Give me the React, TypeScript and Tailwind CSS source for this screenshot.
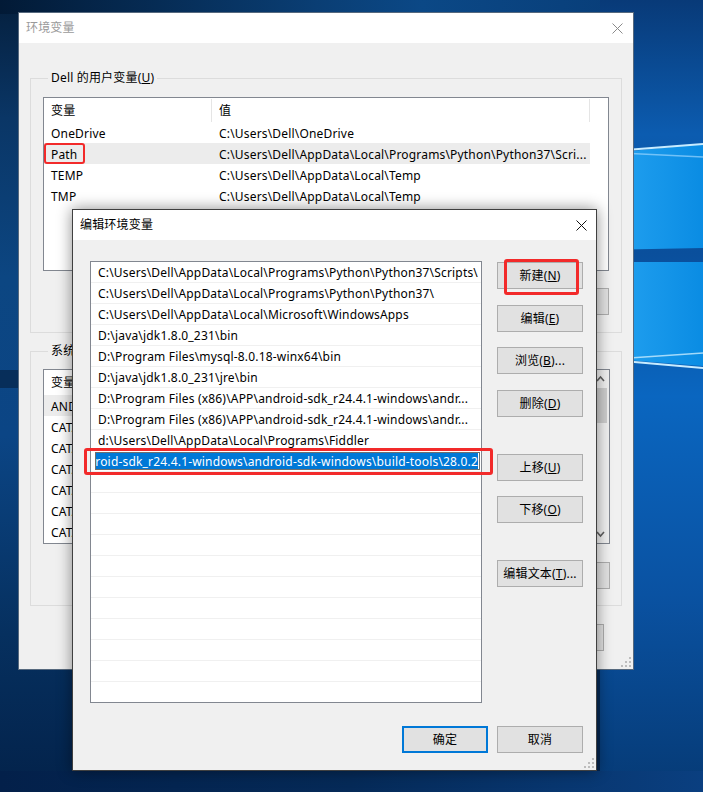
import React from "react";

function Wallpaper() {
  return (
    <svg className="absolute inset-0" width="703" height="792" viewBox="0 0 703 792">
      <defs>
        <linearGradient id="wpBase" x1="0" y1="0" x2="0" y2="1">
          <stop offset="0" stopColor="#05203e" />
          <stop offset="0.15" stopColor="#0a3666" />
          <stop offset="0.35" stopColor="#0c4682" />
          <stop offset="0.55" stopColor="#0b4585" />
          <stop offset="0.8" stopColor="#06305f" />
          <stop offset="1" stopColor="#03224a" />
        </linearGradient>
        <linearGradient id="wpTop" x1="0" y1="0" x2="1" y2="0">
          <stop offset="0" stopColor="#021a36" />
          <stop offset="0.45" stopColor="#0a3e74" />
          <stop offset="0.6" stopColor="#0b4886" />
          <stop offset="1" stopColor="#073a74" />
        </linearGradient>
        <linearGradient id="wpRight" x1="0" y1="0" x2="0" y2="1">
          <stop offset="0" stopColor="#083a78" />
          <stop offset="0.17" stopColor="#0c5cb0" />
          <stop offset="0.32" stopColor="#0a4f9c" />
          <stop offset="0.5" stopColor="#0a66c0" />
          <stop offset="0.75" stopColor="#0a52a2" />
          <stop offset="1" stopColor="#063a75" />
        </linearGradient>
        <linearGradient id="wpPane" x1="0" y1="0" x2="1" y2="0">
          <stop offset="0" stopColor="#26a4f2" />
          <stop offset="1" stopColor="#0a8ce3" />
        </linearGradient>
        <linearGradient id="wpBottom" x1="0" y1="0" x2="1" y2="0">
          <stop offset="0" stopColor="#03204a" />
          <stop offset="0.5" stopColor="#052a58" />
          <stop offset="1" stopColor="#0a3f80" />
        </linearGradient>
      </defs>
      <rect width="703" height="792" fill="url(#wpBase)" />
      <rect width="703" height="14" fill="url(#wpTop)" />
      <rect x="0" y="370" width="72" height="18" fill="#072a52" opacity="0.85" />
      <rect x="600" width="103" height="792" fill="url(#wpRight)" />
      <polygon points="600,154 703,144 703,248 600,250" fill="url(#wpPane)" />
      <polygon points="600,262 703,262 703,366 600,358" fill="url(#wpPane)" />
      <line x1="600" y1="152" x2="703" y2="144" stroke="#c8ecff" strokeWidth="2" />
      <line x1="600" y1="152" x2="703" y2="157" stroke="#9ad6ff" strokeWidth="1.5" opacity="0.7" />
      <line x1="600" y1="360" x2="703" y2="353" stroke="#c8ecff" strokeWidth="1.5" opacity="0.8" />
      <line x1="600" y1="359" x2="703" y2="368" stroke="#c8ecff" strokeWidth="2" />
      <rect y="771" width="703" height="21" fill="url(#wpBottom)" />
    </svg>
  );
}

function CloseX({ color }: { color: string }) {
  return (
    <svg width="11" height="11" viewBox="0 0 11 11">
      <path d="M0.5 0.5 L10.5 10.5 M10.5 0.5 L0.5 10.5" stroke={color} strokeWidth="1" />
    </svg>
  );
}

function Grip() {
  return (
    <svg width="10" height="10" viewBox="0 0 10 10">
      <g fill="#bdbdbd">
        <rect x="8" y="0" width="2" height="2" />
        <rect x="4" y="4" width="2" height="2" />
        <rect x="8" y="4" width="2" height="2" />
        <rect x="0" y="8" width="2" height="2" />
        <rect x="4" y="8" width="2" height="2" />
        <rect x="8" y="8" width="2" height="2" />
      </g>
    </svg>
  );
}

function Btn({
  children,
  primary,
  className,
}: {
  children: React.ReactNode;
  primary?: boolean;
  className?: string;
}) {
  return (
    <div
      className={
        (primary
          ? "border-2 border-[#0078d7] "
          : "border border-[#adadad] ") +
        "w-[86px] h-[27px] shrink-0 bg-[#e1e1e1] flex items-center justify-center whitespace-nowrap pt-[1px] " +
        (className ?? "")
      }
    >
      <span>{children}</span>
    </div>
  );
}

const userVars = [
  { name: "OneDrive", value: "C:\\Users\\Dell\\OneDrive" },
  { name: "Path", value: "C:\\Users\\Dell\\AppData\\Local\\Programs\\Python\\Python37\\Scri...", selected: true },
  { name: "TEMP", value: "C:\\Users\\Dell\\AppData\\Local\\Temp" },
  { name: "TMP", value: "C:\\Users\\Dell\\AppData\\Local\\Temp" },
];

const systemVars = [
  { name: "ANDROID_HOME", selected: true },
  { name: "CATALINA_BASE" },
  { name: "CATALINA_HOME" },
  { name: "CATALINA_TMPDIR" },
  { name: "CATALINA2_BASE" },
  { name: "CATALINA2_HOME" },
  { name: "CATALINA2_TMPDIR" },
];

const pathEntries = [
  "C:\\Users\\Dell\\AppData\\Local\\Programs\\Python\\Python37\\Scripts\\",
  "C:\\Users\\Dell\\AppData\\Local\\Programs\\Python\\Python37\\",
  "C:\\Users\\Dell\\AppData\\Local\\Microsoft\\WindowsApps",
  "D:\\java\\jdk1.8.0_231\\bin",
  "D:\\Program Files\\mysql-8.0.18-winx64\\bin",
  "D:\\java\\jdk1.8.0_231\\jre\\bin",
  "D:\\Program Files (x86)\\APP\\android-sdk_r24.4.1-windows\\andr...",
  "D:\\Program Files (x86)\\APP\\android-sdk_r24.4.1-windows\\andr...",
  "d:\\Users\\Dell\\AppData\\Local\\Programs\\Fiddler",
];

const editingValue =
  "D:\\Program Files (x86)\\APP\\android-sdk_r24.4.1-windows\\android-sdk-windows\\build-tools\\28.0.2";

function EnvironmentWindow() {
  return (
    <div className="absolute left-[18px] top-[12px] w-[616px] h-[658px] border border-[#56697e] bg-[#f0f0f0] flex flex-col">
      <div className="h-[30px] shrink-0 bg-white flex items-center justify-between pl-[7px] pr-[10px]">
        <span className="text-[#9a9a9a]">环境变量</span>
        <CloseX color="#8a8a8a" />
      </div>
      <div className="flex-1 flex flex-col px-[11px] relative">
        <fieldset className="mt-[27px] border border-[#dcdcdc] px-[12px] pb-[17px]">
          <legend className="ml-[5px] px-[3px] leading-[16px]">
            Dell 的用户变量(<u>U</u>)
          </legend>
          <div className="mt-[11px] h-[174px] border border-[#828790] bg-white overflow-hidden">
            <div className="flex h-[24px] pt-[1px]">
              <div className="w-[168px] pl-[7px] flex items-center border-r border-[#e5e5e5]">变量</div>
              <div className="w-[378px] pl-[7px] flex items-center border-r border-[#e5e5e5]">值</div>
            </div>
            {userVars.map((v) => (
              <div
                key={v.name}
                className={"flex h-[21px] w-[546px] items-center pt-[2px] " + (v.selected ? "bg-[#ececec]" : "")}
              >
                <div className="w-[168px] pl-[7px] whitespace-nowrap">{v.name}</div>
                <div className="w-[378px] pl-[7px] whitespace-nowrap overflow-hidden">{v.value}</div>
              </div>
            ))}
          </div>
          <div className="mt-[17px] flex justify-end gap-[10px]">
            <Btn>新建(<u>W</u>)...</Btn>
            <Btn>编辑(<u>I</u>)...</Btn>
            <Btn>删除(<u>D</u>)</Btn>
          </div>
        </fieldset>

        <fieldset className="mt-[10px] border border-[#dcdcdc] pl-[12px] pr-[11px] pb-[16px]">
          <legend className="ml-[5px] px-[3px] leading-[16px]">
            系统变量(<u>S</u>)
          </legend>
          <div className="mt-[10px] h-[175px] border border-[#828790] bg-white overflow-hidden flex">
            <div className="flex-1 overflow-hidden">
              <div className="flex h-[25px] pt-[1px]">
                <div className="w-[168px] pl-[7px] flex items-center border-r border-[#e5e5e5]">变量</div>
                <div className="w-[370px] pl-[7px] flex items-center">值</div>
              </div>
              {systemVars.map((v) => (
                <div
                  key={v.name}
                  className={"flex h-[21px] items-center pt-[2px] " + (v.selected ? "bg-[#ececec]" : "")}
                >
                  <div className="w-[168px] pl-[7px] whitespace-nowrap">{v.name}</div>
                </div>
              ))}
            </div>
            <div className="w-[17px] shrink-0 bg-[#f0f0f0] flex flex-col items-center">
              <svg width="9" height="17" viewBox="0 0 9 17" className="shrink-0">
                <path d="M1 11 L4.5 7 L8 11" stroke="#606060" strokeWidth="1.6" fill="none" />
              </svg>
              <div className="mt-[1px] w-[13px] h-[35px] bg-[#cdcdcd]" />
              <div className="flex-1" />
              <svg width="9" height="17" viewBox="0 0 9 17" className="shrink-0">
                <path d="M1 6 L4.5 10 L8 6" stroke="#606060" strokeWidth="1.6" fill="none" />
              </svg>
            </div>
          </div>
          <div className="mt-[18px] flex justify-end gap-[10px]">
            <Btn>新建(<u>W</u>)...</Btn>
            <Btn>编辑(<u>I</u>)...</Btn>
            <Btn>删除(<u>L</u>)</Btn>
          </div>
        </fieldset>

        <div className="mt-[18px] mr-[18px] flex justify-end gap-[9px]">
          <Btn primary>确定</Btn>
          <Btn>取消</Btn>
        </div>
        <div className="absolute right-[2px] bottom-[2px]">
          <Grip />
        </div>
      </div>
    </div>
  );
}

function EditPathWindow() {
  const emptyRows = Array.from({ length: 11 }, (_, i) => i);
  return (
    <div className="absolute left-[72px] top-[209px] w-[525px] h-[562px] border border-[#404040] bg-[#f0f0f0] shadow-[0_0_14px_rgba(0,0,0,0.45)] flex flex-col">
      <div className="h-[30px] shrink-0 bg-white flex items-center justify-between pl-[7px] pr-[9px]">
        <span>编辑环境变量</span>
        <CloseX color="#111111" />
      </div>
      <div className="flex-1 flex flex-col pt-[21px] pl-[17px] pr-[13px] relative">
        <div className="flex gap-[15px]">
          <div className="w-[392px] h-[442px] shrink-0 border border-[#828790] bg-white overflow-hidden">
            {pathEntries.map((p, i) => (
              <div
                key={i}
                className="h-[21px] pl-[7px] pt-[2px] flex items-center border-b border-[#f0f0f0] whitespace-nowrap overflow-hidden"
              >
                {p}
              </div>
            ))}
            <div className="h-[21px] pl-[4px] pr-[1px] py-[1px] border-b border-[#f0f0f0] flex">
              <div className="flex-1 border border-[#6f6f6f] bg-white pl-[2px] pr-[1px] pt-[1px] flex justify-end items-center overflow-hidden">
                <span className="bg-[#0078d7] text-white whitespace-nowrap leading-[16px] pt-[1px]">{editingValue}</span>
              </div>
            </div>
            {emptyRows.map((i) => (
              <div key={i} className="h-[21px] border-b border-[#f0f0f0]" />
            ))}
          </div>
          <div className="flex flex-col pt-[1px]">
            <Btn>新建(<u>N</u>)</Btn>
            <Btn className="mt-[16px]">编辑(<u>E</u>)</Btn>
            <Btn className="mt-[15px]">浏览(<u>B</u>)...</Btn>
            <Btn className="mt-[16px]">删除(<u>D</u>)</Btn>
            <Btn className="mt-[37px]">上移(<u>U</u>)</Btn>
            <Btn className="mt-[15px]">下移(<u>O</u>)</Btn>
            <Btn className="mt-[37px]">编辑文本(<u>T</u>)...</Btn>
          </div>
        </div>
        <div className="mt-[23px] flex justify-end gap-[9px]">
          <Btn primary>确定</Btn>
          <Btn>取消</Btn>
        </div>
        <div className="absolute right-[2px] bottom-[2px]">
          <Grip />
        </div>
      </div>
    </div>
  );
}

export default function App() {
  return (
    <div className="relative w-[703px] h-[792px] overflow-hidden text-[12px] leading-[16px] tracking-[0.18px] text-black font-['Noto_Sans','Noto_Sans_CJK_SC',sans-serif]">
      <Wallpaper />
      <EnvironmentWindow />
      <EditPathWindow />
      {/* red call-outs */}
      <div className="absolute left-[44px] top-[143px] w-[41px] h-[21px] border-2 border-[#f22a2a] rounded-[3px]" />
      <div className="absolute left-[504px] top-[259px] w-[75px] h-[36px] border-[3px] border-[#f22a2a] rounded-[3px]" />
      <div className="absolute left-[84px] top-[448px] w-[409px] h-[27px] border-[3px] border-[#f22a2a] rounded-[3px]" />
    </div>
  );
}
